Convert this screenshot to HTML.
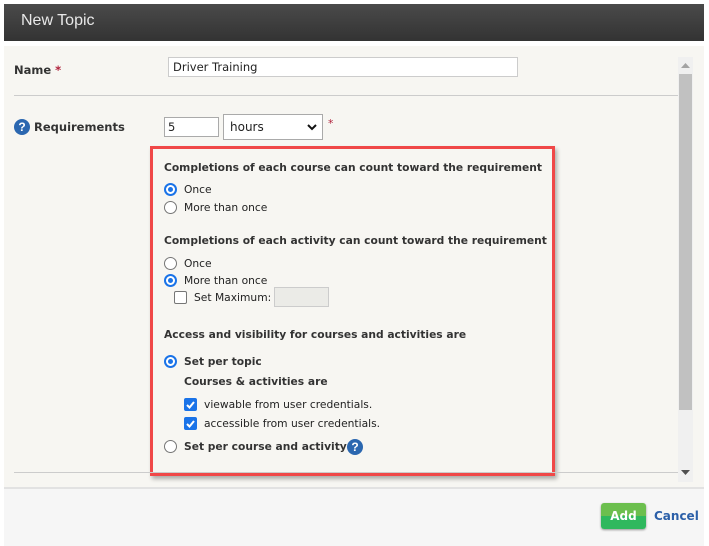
<!DOCTYPE html>
<html><head><meta charset="utf-8"><style>
*{box-sizing:border-box;margin:0;padding:0}
body{width:709px;height:546px;background:#fff;font-family:"DejaVu Sans","Liberation Sans",sans-serif;font-size:10.7px;color:#222;position:relative;overflow:hidden}
.a{position:absolute;white-space:nowrap}
.b{font-weight:bold;color:#333}
.rad{position:absolute;width:13px;height:13px;border-radius:50%;border:1px solid #767676;background:#fff}
.rad.on{border:2px solid #1a73e8}
.rad.on:after{content:"";position:absolute;left:2px;top:2px;width:5px;height:5px;border-radius:50%;background:#1a73e8}
.chk{position:absolute;width:13px;height:13px;border:1px solid #767676;border-radius:2px;background:#fff}
.chk.on{background:#1a73e8;border-color:#1a73e8}
.q{position:absolute;width:16px;height:16px;border-radius:50%;background:#2b67b0;color:#fff;font-weight:bold;font-size:12px;text-align:center;line-height:16px;font-family:"Liberation Sans",sans-serif}
</style></head><body>
<div class="a" style="left:4px;top:4px;width:700px;height:37px;background:linear-gradient(#4a4a4a,#333);"></div>
<div class="a" style="left:21px;top:12px;color:#e8e8e8;font-size:16px;font-family:'Liberation Sans',sans-serif">New Topic</div>
<div class="a" style="left:4px;top:46px;width:700px;height:442px;background:#f7f6f2"></div>
<div class="a" style="left:4px;top:487px;width:700px;height:2px;background:#e2e2e2"></div>
<div class="a" style="left:4px;top:489px;width:700px;height:57px;background:#f6f6f6"></div>
<div class="a b" style="left:14px;top:63px;font-size:11.5px">Name <span style="color:#b0203a">*</span></div>
<div class="a" style="left:168px;top:57px;width:350px;height:20px;border:1px solid #ccc;background:#fff;padding:2px 4px;color:#222;font-size:11.5px">Driver Training</div>
<div class="a" style="left:14px;top:95px;width:664px;height:1px;background:#ccc"></div>
<div class="q" style="left:14px;top:119px">?</div>
<div class="a b" style="left:34px;top:120px;font-size:11.5px">Requirements</div>
<div class="a" style="left:164px;top:117px;width:55px;height:20px;border:1px solid #aaa;background:#fff;padding:2px 3px;font-size:11.5px">5</div>
<div class="a" style="left:223px;top:114px;width:100px;height:26px;border:1px solid #aaa;background:#fff;padding:5px 6px;font-size:12px">hours<svg style="position:absolute;right:5px;top:9px" width="10" height="7"><path d="M1 1l4 4 4-4" stroke="#111" stroke-width="2" fill="none"/></svg></div>
<div class="a" style="left:328px;top:117px;color:#b0203a">*</div>
<div class="a" style="left:150px;top:146px;width:405px;height:330px;border:3px solid #f04848;box-shadow:2px 3px 4px rgba(0,0,0,.3)"></div>
<div class="a b" style="left:164px;top:161px">Completions of each course can count toward the requirement</div>
<div class="rad on" style="left:164px;top:183px"></div><div class="a" style="left:184px;top:183px">Once</div>
<div class="rad" style="left:164px;top:201px"></div><div class="a" style="left:184px;top:201px">More than once</div>
<div class="a b" style="left:164px;top:234px">Completions of each activity can count toward the requirement</div>
<div class="rad" style="left:164px;top:257px"></div><div class="a" style="left:184px;top:257px">Once</div>
<div class="rad on" style="left:164px;top:274px"></div><div class="a" style="left:184px;top:274px">More than once</div>
<div class="chk" style="left:174px;top:291px"></div><div class="a" style="left:194px;top:291px">Set Maximum:</div>
<div class="a" style="left:274px;top:287px;width:55px;height:20px;border:1px solid #ccc;background:#ebebe7"></div>
<div class="a b" style="left:164px;top:328px">Access and visibility for courses and activities are</div>
<div class="rad on" style="left:164px;top:355px"></div><div class="a b" style="left:184px;top:355px">Set per topic</div>
<div class="a b" style="left:184px;top:375px">Courses &amp; activities are</div>
<div class="chk on" style="left:184px;top:398px"><svg width="11" height="11" style="position:absolute;left:0;top:0"><path d="M2 6l2.5 2.5L9 3" stroke="#fff" stroke-width="2" fill="none"/></svg></div><div class="a" style="left:204px;top:398px">viewable from user credentials.</div>
<div class="chk on" style="left:184px;top:417px"><svg width="11" height="11" style="position:absolute;left:0;top:0"><path d="M2 6l2.5 2.5L9 3" stroke="#fff" stroke-width="2" fill="none"/></svg></div><div class="a" style="left:204px;top:417px">accessible from user credentials.</div>
<div class="rad" style="left:164px;top:440px"></div><div class="a b" style="left:184px;top:440px">Set per course and activity</div>
<div class="q" style="left:347px;top:439px">?</div>
<div class="a" style="left:14px;top:472px;width:664px;height:1px;background:#ccc"></div>
<div class="a" style="left:678px;top:57px;width:15px;height:425px;background:#f0f0f0"></div>
<div class="a" style="left:679px;top:74px;width:13px;height:336px;background:#c1c1c1"></div>
<svg class="a" style="left:681px;top:63px" width="9" height="5"><path d="M0 5L4.5 0 9 5z" fill="#a3a3a3"/></svg>
<svg class="a" style="left:681px;top:470px" width="9" height="5"><path d="M0 0L4.5 5 9 0z" fill="#505050"/></svg>
<div class="a" style="left:601px;top:503px;width:45px;height:26px;border-radius:3px;background:linear-gradient(#6cbf4e 50%,#2fb85e 50%);color:#fff;font-weight:bold;font-size:12px;text-align:center;line-height:26px;box-shadow:0 1px 2px rgba(0,0,0,.4)">Add</div>
<div class="a" style="left:654px;top:509px;color:#2b5fa8;font-weight:bold;font-size:12px">Cancel</div>
</body></html>
